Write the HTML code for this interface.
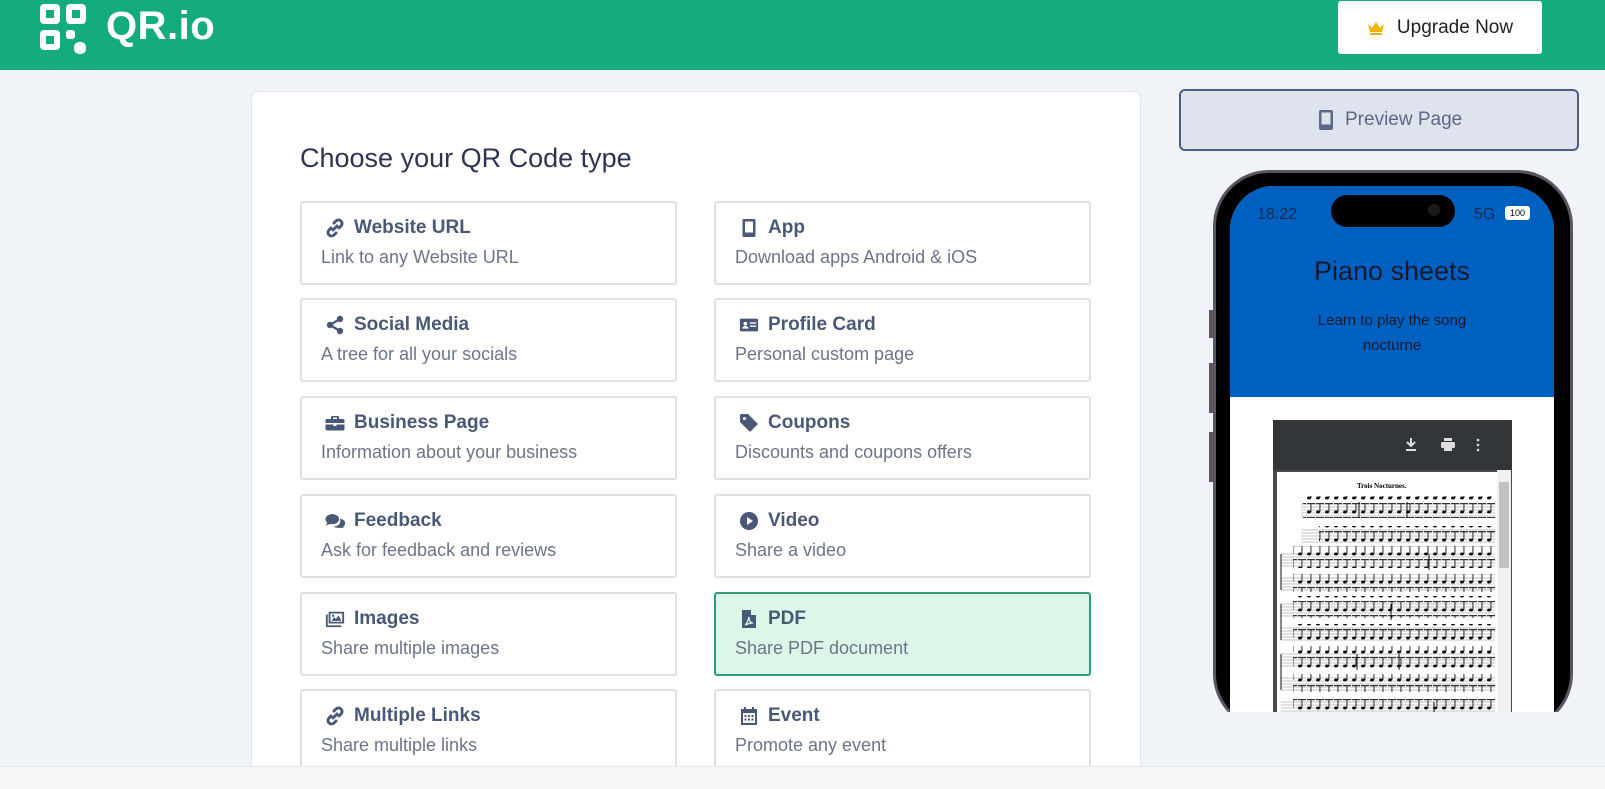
<!DOCTYPE html>
<html><head><meta charset="utf-8"><style>
*{box-sizing:border-box;margin:0;padding:0}
body{width:1605px;height:789px;overflow:hidden;background:#f0f3f8;font-family:"Liberation Sans",sans-serif;position:relative}
.hdr{position:absolute;left:0;top:0;width:1605px;height:70px;background:#14ac7c}
.logo{position:absolute;left:40px;top:4px}
.logot{position:absolute;left:106px;top:4px;color:#fff;font-size:40px;font-weight:bold;letter-spacing:0.5px}
.upg{position:absolute;left:1338px;top:1px;width:204px;height:53px;background:#fff;border-radius:3px;font-size:19px;color:#222;display:flex;align-items:center;justify-content:center;gap:12px}
.card{position:absolute;left:251px;top:91px;width:890px;height:676px;background:#fff;border-radius:8px 8px 0 0;border:1px solid #e3e6ec;border-bottom:none}
h1{position:absolute;left:300px;top:143px;font-size:27px;font-weight:normal;color:#2e3454}
.b{position:absolute;width:377px;height:84px;border:2px solid #dde0e6;border-radius:3px;background:#fff}
.b.sel{background:#dcf6e8;border-color:#2e9c78}
.t{position:absolute;left:23px;top:14px;font-size:19px;font-weight:bold;color:#4a5878;display:flex;align-items:center;gap:9px}
.t svg{width:20px;height:20px;fill:#4a5878}
.s{position:absolute;left:19px;top:44px;font-size:18px;color:#6c7488}
.prev{position:absolute;left:1179px;top:89px;width:400px;height:62px;border:2px solid #4d5c85;border-radius:6px;background:#dfe3ee;color:#5b6888;font-size:19px;display:flex;align-items:center;padding-left:138px;gap:12px}
.phone{position:absolute;left:1213px;top:170px;width:360px;height:560px;background:#000;border-radius:56px;border:3px solid #5a5560}
.scr{position:absolute;left:1230px;top:186px;width:324px;height:540px;border-radius:44px 44px 0 0;overflow:hidden;background:#fff}
.blue{position:absolute;left:0;top:0;width:324px;height:211px;background:#0060c0}
.bot{position:absolute;left:1150px;top:712px;width:455px;height:77px;background:#f0f3f8}
.bot2{position:absolute;left:0;top:766px;width:1605px;height:23px;background:#f5f6f8;border-top:1px solid #e6e8ec}
</style></head><body>
<div class="hdr"></div>
<svg class="logo" width="46" height="50" viewBox="0 0 46 50"><g fill="#fff"><path d="M0 4a4 4 0 0 1 4-4h12a4 4 0 0 1 4 4v12a4 4 0 0 1-4 4H4a4 4 0 0 1-4-4zM6 6v8h8V6z"/><path d="M26 4a4 4 0 0 1 4-4h12a4 4 0 0 1 4 4v12a4 4 0 0 1-4 4H30a4 4 0 0 1-4-4zM32 6v8h8V6z"/><path d="M0 30a4 4 0 0 1 4-4h12a4 4 0 0 1 4 4v12a4 4 0 0 1-4 4H4a4 4 0 0 1-4-4zM6 32v8h8v-8z"/><rect x="26" y="26" width="9" height="9" rx="3"/><rect x="34" y="38" width="12" height="12" rx="5"/></g></svg>
<div class="logot">QR.io</div>
<div class="upg"><svg width="18" height="14" viewBox="0 0 18 14"><path d="M1 3l4 4 4-6 4 6 4-4-2 8H3z" fill="#f0b400"/><rect x="3" y="12" width="12" height="2" fill="#f0b400"/></svg>Upgrade Now</div>
<div class="card"></div>
<h1>Choose your QR Code type</h1>

<div class="b" style="left:300px;top:201px"><div class="t"><svg viewBox="0 0 20 20"><path d="M8 12l4-4M9 5l2-2a3.5 3.5 0 0 1 5 5l-2 2M11 15l-2 2a3.5 3.5 0 0 1-5-5l2-2" stroke="#4a5878" stroke-width="3" fill="none" stroke-linecap="round"/></svg>Website URL</div><div class="s">Link to any Website URL</div></div>
<div class="b" style="left:714px;top:201px"><div class="t"><svg viewBox="0 0 20 20"><path d="M5 1h10a1.5 1.5 0 0 1 1.5 1.5v15A1.5 1.5 0 0 1 15 19H5a1.5 1.5 0 0 1-1.5-1.5v-15A1.5 1.5 0 0 1 5 1zM6 3.5v11h8v-11z"/></svg>App</div><div class="s">Download apps Android &amp; iOS</div></div>
<div class="b" style="left:300px;top:298px"><div class="t"><svg viewBox="0 0 20 20"><circle cx="15" cy="4" r="3.2"/><circle cx="5" cy="10" r="3.2"/><circle cx="15" cy="16" r="3.2"/><path d="M15 4L5 10l10 6" stroke="#4a5878" stroke-width="2.4" fill="none"/></svg>Social Media</div><div class="s">A tree for all your socials</div></div>
<div class="b" style="left:714px;top:298px"><div class="t"><svg viewBox="0 0 22 20"><rect x="1" y="3" width="20" height="14" rx="1.5"/><circle cx="7" cy="8.5" r="2" fill="#fff"/><path d="M3.5 14a3.5 3 0 0 1 7 0z" fill="#fff"/><rect x="12" y="7" width="7" height="1.5" fill="#fff"/><rect x="12" y="10.5" width="7" height="1.5" fill="#fff"/></svg>Profile Card</div><div class="s">Personal custom page</div></div>
<div class="b" style="left:300px;top:396px"><div class="t"><svg viewBox="0 0 20 20"><path d="M7 3h6a1 1 0 0 1 1 1v2h4a1.5 1.5 0 0 1 1.5 1.5V10h-19V7.5A1.5 1.5 0 0 1 2 6h4V4a1 1 0 0 1 1-1zM8 4.5V6h4V4.5zM.5 11.5h8v1.5h3v-1.5h8V16a1.5 1.5 0 0 1-1.5 1.5H2A1.5 1.5 0 0 1 .5 16z"/></svg>Business Page</div><div class="s">Information about your business</div></div>
<div class="b" style="left:714px;top:396px"><div class="t"><svg viewBox="0 0 20 20"><path d="M1 2.5A1.5 1.5 0 0 1 2.5 1H9l10 10-8 8L1 9zM5.5 4a1.5 1.5 0 1 0 0 3 1.5 1.5 0 0 0 0-3z" fill-rule="evenodd"/></svg>Coupons</div><div class="s">Discounts and coupons offers</div></div>
<div class="b" style="left:300px;top:494px"><div class="t"><svg viewBox="0 0 22 20"><ellipse cx="8" cy="8" rx="7.5" ry="5.5"/><path d="M3 11l-2 4 5-2z"/><path d="M16.5 7.5a6 4.8 0 0 1-1 10l-1 0a7 5 0 0 1-5-1.5c5 0 8.5-3 7-8.5z"/><path d="M18 15l3 3-5-1z"/></svg>Feedback</div><div class="s">Ask for feedback and reviews</div></div>
<div class="b" style="left:714px;top:494px"><div class="t"><svg viewBox="0 0 20 20"><path d="M10 1a9 9 0 1 0 0 18 9 9 0 0 0 0-18zM8 6l6 4-6 4z" fill-rule="evenodd"/></svg>Video</div><div class="s">Share a video</div></div>
<div class="b" style="left:300px;top:592px"><div class="t"><svg viewBox="0 0 22 20"><path d="M4 2h17v13H4zM6 4v9h13V4z" fill-rule="evenodd"/><path d="M7 12l3-4 2 2 3-4 3 6z"/><circle cx="9" cy="6.5" r="1.3"/><path d="M1 5h2v12h15v2H1z"/></svg>Images</div><div class="s">Share multiple images</div></div>
<div class="b sel" style="left:714px;top:592px"><div class="t"><svg viewBox="0 0 20 20"><path d="M3 1h9l5 5v13H3zM12 1v5h5" /><path d="M6 16c2-1 3-4 4-8 0 3 1 6 4 6-3 0-5 1-8 2z" stroke="#dcf6e8" stroke-width="1.3" fill="none"/></svg>PDF</div><div class="s">Share PDF document</div></div>
<div class="b" style="left:300px;top:689px"><div class="t"><svg viewBox="0 0 20 20"><path d="M8 12l4-4M9 5l2-2a3.5 3.5 0 0 1 5 5l-2 2M11 15l-2 2a3.5 3.5 0 0 1-5-5l2-2" stroke="#4a5878" stroke-width="3" fill="none" stroke-linecap="round"/></svg>Multiple Links</div><div class="s">Share multiple links</div></div>
<div class="b" style="left:714px;top:689px"><div class="t"><svg viewBox="0 0 20 20"><path d="M2 3h16v16H2zM4 7v10h12V7z" fill-rule="evenodd"/><rect x="5" y="1" width="2" height="4"/><rect x="13" y="1" width="2" height="4"/><g><rect x="5.5" y="9" width="2" height="2"/><rect x="9" y="9" width="2" height="2"/><rect x="12.5" y="9" width="2" height="2"/><rect x="5.5" y="12.5" width="2" height="2"/><rect x="9" y="12.5" width="2" height="2"/><rect x="12.5" y="12.5" width="2" height="2"/></g></svg>Event</div><div class="s">Promote any event</div></div>

<div class="prev"><svg width="14" height="20" viewBox="0 0 14 20"><path d="M2 0h10a2 2 0 0 1 2 2v16a2 2 0 0 1-2 2H2a2 2 0 0 1-2-2V2a2 2 0 0 1 2-2zM2.5 2.5v12h9v-12z" fill="#5b6888" fill-rule="evenodd"/></svg>Preview Page</div>

<div class="phone"></div>
<div style="position:absolute;left:1209px;top:310px;width:4px;height:28px;background:#5a5560"></div>
<div style="position:absolute;left:1209px;top:363px;width:4px;height:50px;background:#5a5560"></div>
<div style="position:absolute;left:1209px;top:432px;width:4px;height:50px;background:#5a5560"></div>
<div class="scr">
 <div class="blue"></div>
 <div style="position:absolute;left:27px;top:20px;font-size:16px;color:#1a2a50">18:22</div>
 <div style="position:absolute;left:101px;top:9px;width:124px;height:32px;background:#000;border-radius:16px"></div>
 <div style="position:absolute;left:198px;top:18px;width:12px;height:12px;background:#1a1a1a;border-radius:50%"></div>
 <div style="position:absolute;left:244px;top:20px;font-size:16px;color:#1a2a50">5G</div>
 <div style="position:absolute;left:275px;top:20px;width:25px;height:14px;background:#fff;border-radius:3px;font-size:9px;text-align:center;line-height:14px;color:#000">100</div>
 <div style="position:absolute;left:0;top:70px;width:324px;text-align:center;font-size:27px;color:#101a30">Piano sheets</div>
 <div style="position:absolute;left:0;top:122px;width:324px;text-align:center;font-size:15px;line-height:25px;color:#101a30">Learn to play the song<br>nocturne</div>
 <div style="position:absolute;left:43px;top:234px;width:239px;height:310px;background:#4a4a4a"></div>
 <div style="position:absolute;left:43px;top:234px;width:239px;height:50px;background:#323639"></div>
 <svg style="position:absolute;left:175px;top:251px" width="80" height="16" viewBox="0 0 80 16"><path d="M6 1v7M2 5l4 4 4-4M1 13h10" stroke="#ddd" stroke-width="2" fill="none"/><rect x="36" y="5" width="14" height="6" rx="1.5" fill="#ddd"/><rect x="39" y="1" width="8" height="3" fill="#ddd"/><rect x="39" y="10" width="8" height="4" fill="#ddd"/><circle cx="73" cy="3" r="1.3" fill="#ddd"/><circle cx="73" cy="8" r="1.3" fill="#ddd"/><circle cx="73" cy="13" r="1.3" fill="#ddd"/></svg>
 <div style="position:absolute;left:47px;top:286px;width:220px;height:260px;background:#fff"></div>
 <div style="position:absolute;left:267px;top:284px;width:14px;height:260px;background:#f1f1f1"></div>
 <div style="position:absolute;left:269px;top:296px;width:10px;height:86px;background:#c1c1c1"></div>
 <svg style="position:absolute;left:49px;top:288px" width="216" height="240" viewBox="0 0 216 240">
  <defs><pattern id="n" width="9" height="14" patternUnits="userSpaceOnUse"><ellipse cx="3" cy="10" rx="2" ry="1.5" fill="#111"/><rect x="4.5" y="1" width="0.9" height="9" fill="#111"/><rect x="1" y="1" width="8" height="1.2" fill="#333"/></pattern></defs>
  <text x="78" y="14" font-size="7" font-family="Liberation Serif" font-weight="bold">Trois Nocturnes.</text>
  <g stroke="#888" stroke-width="0.6">
   <path d="M22 30h194M22 33h194M22 36h194M22 39h194M22 42h194M22 56h194M22 59h194M22 62h194M22 65h194M22 68h194"/>
   <path d="M2 80h214M2 83h214M2 86h214M2 89h214M2 92h214M2 104h214M2 107h214M2 110h214M2 113h214M2 116h214"/>
   <path d="M2 130h214M2 133h214M2 136h214M2 139h214M2 142h214M2 154h214M2 157h214M2 160h214M2 163h214M2 166h214"/>
   <path d="M2 180h214M2 183h214M2 186h214M2 189h214M2 192h214M2 204h214M2 207h214M2 210h214M2 213h214M2 216h214"/>
   <path d="M2 228h214M2 231h214M2 234h214M2 237h214"/>
  </g>
  <g fill="url(#n)">
   <rect x="24" y="22" width="192" height="22"/><rect x="40" y="52" width="176" height="18"/>
   <rect x="14" y="72" width="202" height="22"/><rect x="14" y="100" width="202" height="18"/>
   <rect x="14" y="122" width="202" height="22"/><rect x="14" y="150" width="202" height="18"/>
   <rect x="14" y="172" width="202" height="22"/><rect x="14" y="200" width="202" height="18"/>
   <rect x="14" y="222" width="202" height="18"/>
  </g>
  <g stroke="#111" stroke-width="1"><path d="M80 28v16M128 28v16M150 80v16M112 130v16M78 180v16M120 180v16M155 228v12M2 80v36M2 130v36M2 180v36"/></g>
 </svg>
</div>
<div class="bot"></div>
<div class="bot2"></div>
</body></html>
